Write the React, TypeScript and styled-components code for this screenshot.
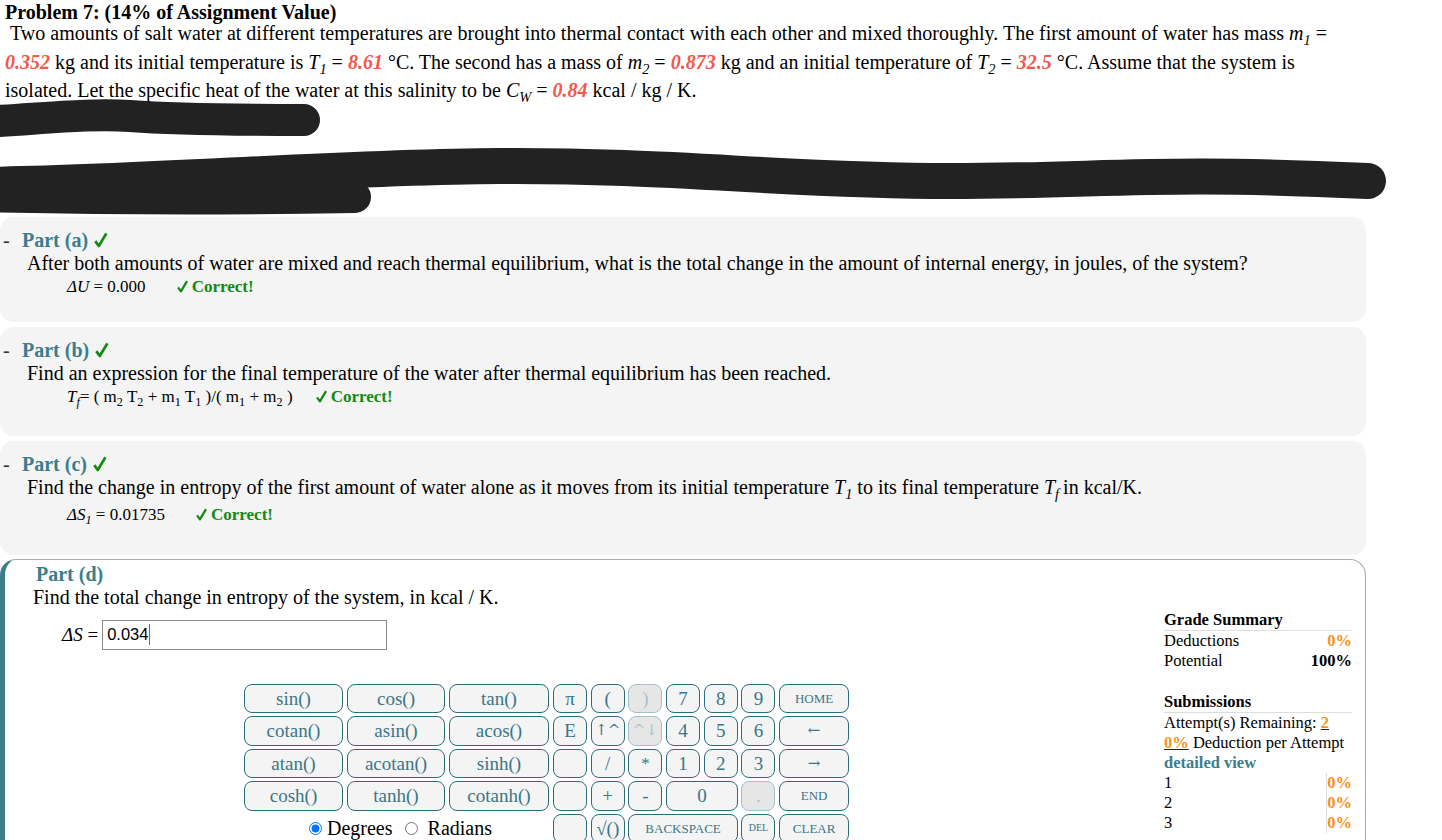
import React from 'react';
import styled, { createGlobalStyle } from 'styled-components';

const TEAL = '#3b7e8b';
const KEY_BORDER = '#2d6c7c';
const RED = '#f4574b';
const ORANGE = '#f7931e';
const GREEN = '#128a12';

const GlobalStyle = createGlobalStyle`
  html, body {
    margin: 0;
    padding: 0;
    overflow: hidden;
  }
  body {
    font-family: "Liberation Serif", "Times New Roman", serif;
    color: #000;
    background: #fff;
  }
`;

const Page = styled.div`
  width: 1442px;
  height: 840px;
  overflow: hidden;
`;

const Title = styled.div`
  font-size: 20px;
  font-weight: bold;
  line-height: 22px;
  padding: 1px 5px 0;
`;

const Statement = styled.div`
  margin-top: -4px;
  padding: 0 5px;
  font-size: 20px;
  line-height: 28.5px;
  white-space: nowrap;
`;

const Var = styled.i``;

const Sub = styled.sub`
  font-size: 0.72em;
  line-height: 0;
  vertical-align: -0.32em;
`;

const Given = styled.b`
  color: ${RED};
  font-style: italic;
`;

const Redaction = styled.svg`
  display: block;
  margin-top: -6px;
  overflow: visible;
`;

const Parts = styled.div`
  display: flex;
  flex-direction: column;
  gap: 5px;
  padding-top: 5px;
`;

const PartPanel = styled.div<{ $h: number }>`
  box-sizing: border-box;
  width: 1366px;
  height: ${({ $h }) => $h}px;
  padding-top: 12px;
  background: #f4f4f4;
  border-radius: 14px;
`;

const PartHeader = styled.div`
  display: flex;
  align-items: center;
  height: 22px;
  font-size: 20px;
  line-height: 22px;
  font-weight: bold;
  color: ${TEAL};
`;

const Toggle = styled.span`
  width: 19px;
  padding-left: 3px;
  color: #333;
  font-weight: normal;
`;

const CheckSvg = styled.svg<{ $gap?: number }>`
  display: inline-block;
  flex: none;
  margin: 0 ${({ $gap }) => $gap ?? 0}px 0 6px;
  vertical-align: -1px;
`;

const CheckMark = ({ size = 15, gap }: { size?: number; gap?: number }) => (
  <CheckSvg $gap={gap} width={size * 0.85} height={size} viewBox="0 0 13 15">
    <path d="M1.2 8.6 L4.6 13.2 L11.8 1.2" fill="none" stroke={GREEN} strokeWidth="2.6" strokeLinejoin="round" />
  </CheckSvg>
);

const Question = styled.div<{ $indent?: number }>`
  padding-left: ${({ $indent }) => $indent ?? 27}px;
  font-size: 20px;
  line-height: 24px;
`;

const Answer = styled.div<{ $mt?: number }>`
  display: flex;
  align-items: baseline;
  padding-left: 67px;
  margin-top: ${({ $mt }) => $mt || 0}px;
  font-size: 17px;
  line-height: 24px;
`;

const Correct = styled.span<{ $gap?: number }>`
  margin-left: ${({ $gap }) => $gap ?? 25}px;
  color: ${GREEN};
  font-weight: bold;
`;

const ActivePart = styled.div`
  box-sizing: border-box;
  width: 1366px;
  height: 300px;
  margin-top: -1px;
  display: flex;
  border: 1px solid #aaa;
  border-left: 5px solid ${TEAL};
  border-bottom: none;
  border-radius: 16px 16px 0 0;
`;

const WorkArea = styled.div`
  flex: 1;
  padding: 3px 0 0 31px;
`;

const InputRow = styled.div`
  display: flex;
  align-items: center;
  margin: 11px 0 0 26px;
  font-size: 19px;
  gap: 4px;
`;

const AnswerBox = styled.div`
  box-sizing: border-box;
  width: 285px;
  height: 30px;
  display: flex;
  align-items: center;
  padding-left: 4px;
  border: 1px solid #8a8a8a;
  font-family: "Liberation Sans", Arial, sans-serif;
  font-size: 16.5px;
`;

const Caret = styled.span`
  width: 1px;
  height: 21px;
  margin-left: 1px;
  background: #e0405a;
`;

const Keypad = styled.div`
  display: flex;
  gap: 4px;
  margin: 34px 0 0 208px;
`;

const FuncGrid = styled.div`
  display: grid;
  grid-template-columns: 99px 98px 100px;
  grid-auto-rows: 29.5px;
  column-gap: 4px;
  row-gap: 3px;
`;

const PadGrid = styled.div`
  display: grid;
  grid-template-columns: repeat(6, 34px) 70px;
  grid-auto-rows: 29.5px;
  column-gap: 3.7px;
  row-gap: 3px;
`;

const Key = styled.button<{ $span?: number; $size?: number; $off?: boolean; $sym?: boolean }>`
  grid-column: span ${({ $span }) => $span || 1};
  padding: 0;
  border: 1px solid ${({ $off }) => ($off ? '#a4c1c9' : KEY_BORDER)};
  border-radius: 8px;
  background: ${({ $off }) => ($off ? '#e6e6e6' : '#f4f4f4')};
  color: ${({ $off }) => ($off ? '#a8c4cb' : '#3a7687')};
  font-family: ${({ $sym }) =>
    $sym ? '"DejaVu Serif", "DejaVu Sans", serif' : '"Liberation Serif", "Times New Roman", serif'};
  font-size: ${({ $size }) => $size || 19}px;
  line-height: 1;
  cursor: pointer;
`;

const AngleMode = styled.div`
  grid-column: span 3;
  display: flex;
  align-items: center;
  justify-content: center;
  padding-left: 20px;
  font-size: 20px;
  label {
    display: flex;
    align-items: center;
    gap: 3px;
    margin-right: 12px;
  }
  input {
    margin: 0 2px 0 0;
    width: 13px;
    height: 13px;
  }
`;

const Sidebar = styled.div`
  width: 188px;
  margin: 50px 13px 0 0;
  font-size: 16.5px;
  line-height: 20px;
`;

const SideHead = styled.div<{ $mt?: number }>`
  margin-top: ${({ $mt }) => $mt || 0}px;
  font-weight: bold;
  border-bottom: 1px solid #ddd;
  line-height: 20px;
`;

const SideRow = styled.div`
  display: flex;
  justify-content: space-between;
`;

const Pct = styled.span<{ $plain?: boolean }>`
  font-weight: bold;
  color: ${({ $plain }) => ($plain ? '#000' : ORANGE)};
`;

const Mark = styled.span`
  color: ${ORANGE};
  font-weight: bold;
  text-decoration: underline;
  text-decoration-color: #222;
`;

const DetailLink = styled.div`
  color: ${TEAL};
  font-weight: bold;
`;

const AttemptCell = styled.span`
  width: 25px;
  text-align: right;
  border-left: 1px solid #ddd;
  color: ${ORANGE};
  font-weight: bold;
`;

const funcKeys = [
  'sin()', 'cos()', 'tan()',
  'cotan()', 'asin()', 'acos()',
  'atan()', 'acotan()', 'sinh()',
  'cosh()', 'tanh()', 'cotanh()',
];

type PadKey = { label: string; span?: number; size?: number; off?: boolean; sym?: boolean };

const padKeys: PadKey[] = [
  { label: 'π' }, { label: '(' }, { label: ')', off: true }, { label: '7' }, { label: '8' }, { label: '9' }, { label: 'HOME', size: 13 },
  { label: 'E' }, { label: '↑^', size: 15, sym: true }, { label: '^↓', off: true, size: 15, sym: true }, { label: '4' }, { label: '5' }, { label: '6' }, { label: '←', size: 15, sym: true },
  { label: '' }, { label: '/' }, { label: '*', size: 17 }, { label: '1' }, { label: '2' }, { label: '3' }, { label: '→', size: 15, sym: true },
  { label: '' }, { label: '+' }, { label: '-' }, { label: '0', span: 2 }, { label: '.', off: true }, { label: 'END', size: 13 },
  { label: '' }, { label: '√()' }, { label: 'BACKSPACE', span: 3, size: 13 }, { label: 'DEL', size: 10 }, { label: 'CLEAR', size: 13 },
];

export default function App() {
  return (
    <Page>
      <GlobalStyle />
      <Title>Problem 7: (14% of Assignment Value)</Title>
      <Statement>
        &nbsp;Two amounts of salt water at different temperatures are brought into thermal contact with each other and
        mixed thoroughly. The first amount of water has mass <Var>m<Sub>1</Sub></Var> =
        <br />
        <Given>0.352</Given> kg and its initial temperature is <Var>T<Sub>1</Sub></Var> = <Given>8.61</Given> °C. The
        second has a mass of <Var>m<Sub>2</Sub></Var> = <Given>0.873</Given> kg and an initial temperature of{' '}
        <Var>T<Sub>2</Sub></Var> = <Given>32.5</Given> °C. Assume that the system is
        <br />
        isolated. Let the specific heat of the water at this salinity to be <Var>C<Sub>W</Sub></Var> ={' '}
        <Given>0.84</Given> kcal / kg / K.
      </Statement>

      <Redaction width="1442" height="113" viewBox="0 98 1442 113">
        <g fill="none" stroke="#222" strokeLinecap="round" strokeLinejoin="round">
          <path d="M -20 121 C 40 118, 90 112, 130 115 S 250 119, 304 119" strokeWidth="32" />
          <path d="M -20 184 C 150 182, 330 166, 500 165 S 790 180, 950 180 S 1150 170, 1368 180" strokeWidth="36" />
          <path d="M -20 195 C 100 198, 250 198, 355 196" strokeWidth="32" />
        </g>
      </Redaction>

      <Parts>
        <PartPanel $h={105}>
          <PartHeader>
            <Toggle>-</Toggle>Part (a)
            <CheckMark size={16} />
          </PartHeader>
          <Question>
            After both amounts of water are mixed and reach thermal equilibrium, what is the total change in the amount
            of internal energy, in joules, of the system?
          </Question>
          <Answer>
            <span>
              <Var>ΔU</Var> = 0.000
            </span>
            <Correct>
              <CheckMark size={13} gap={4} />
              Correct!
            </Correct>
          </Answer>
        </PartPanel>

        <PartPanel $h={109}>
          <PartHeader>
            <Toggle>-</Toggle>Part (b)
            <CheckMark size={16} />
          </PartHeader>
          <Question>
            Find an expression for the final temperature of the water after thermal equilibrium has been reached.
          </Question>
          <Answer>
            <span>
              <Var>
                T<Sub>f</Sub>
              </Var>
              = ( m<Sub>2</Sub> T<Sub>2</Sub> + m<Sub>1</Sub> T<Sub>1</Sub> )/( m<Sub>1</Sub> + m<Sub>2</Sub> )
            </span>
            <Correct $gap={17}>
              <CheckMark size={13} gap={4} />
              Correct!
            </Correct>
          </Answer>
        </PartPanel>

        <PartPanel $h={114}>
          <PartHeader>
            <Toggle>-</Toggle>Part (c)
            <CheckMark size={16} />
          </PartHeader>
          <Question>
            Find the change in entropy of the first amount of water alone as it moves from its initial temperature{' '}
            <Var>
              T<Sub>1</Sub>
            </Var>{' '}
            to its final temperature{' '}
            <Var>
              T<Sub>f</Sub>
            </Var>
            &thinsp;in kcal/K.
          </Question>
          <Answer $mt={4}>
            <span>
              <Var>
                ΔS<Sub>1</Sub>
              </Var>{' '}
              = 0.01735
            </span>
            <Correct>
              <CheckMark size={13} gap={4} />
              Correct!
            </Correct>
          </Answer>
        </PartPanel>

        <ActivePart>
          <WorkArea>
            <PartHeader>Part (d)</PartHeader>
            <Question $indent={0} style={{ marginLeft: -3 }}>
              Find the total change in entropy of the system, in kcal / K.
            </Question>
            <InputRow>
              <span>
                <Var>ΔS</Var> =
              </span>
              <AnswerBox>
                0.034
                <Caret />
              </AnswerBox>
            </InputRow>

            <Keypad>
              <FuncGrid>
                {funcKeys.map((k) => (
                  <Key key={k}>{k}</Key>
                ))}
                <AngleMode>
                  <label>
                    <input type="radio" name="angle" defaultChecked />
                    Degrees
                  </label>
                  <label>
                    <input type="radio" name="angle" />
                    &nbsp;Radians
                  </label>
                </AngleMode>
              </FuncGrid>
              <PadGrid>
                {padKeys.map((k, i) => (
                  <Key key={i} $span={k.span} $size={k.size} $off={k.off} $sym={k.sym}>
                    {k.label}
                  </Key>
                ))}
              </PadGrid>
            </Keypad>
          </WorkArea>

          <Sidebar>
            <SideHead>Grade Summary</SideHead>
            <SideRow>
              <span>Deductions</span>
              <Pct>0%</Pct>
            </SideRow>
            <SideRow>
              <span>Potential</span>
              <Pct $plain>100%</Pct>
            </SideRow>
            <SideHead $mt={21}>Submissions</SideHead>
            <div>
              Attempt(s) Remaining: <Mark>2</Mark>
            </div>
            <div>
              <Mark>0%</Mark> Deduction per Attempt
            </div>
            <DetailLink>detailed view</DetailLink>
            {[1, 2, 3].map((n) => (
              <SideRow key={n}>
                <span>{n}</span>
                <AttemptCell>0%</AttemptCell>
              </SideRow>
            ))}
          </Sidebar>
        </ActivePart>
      </Parts>
    </Page>
  );
}
